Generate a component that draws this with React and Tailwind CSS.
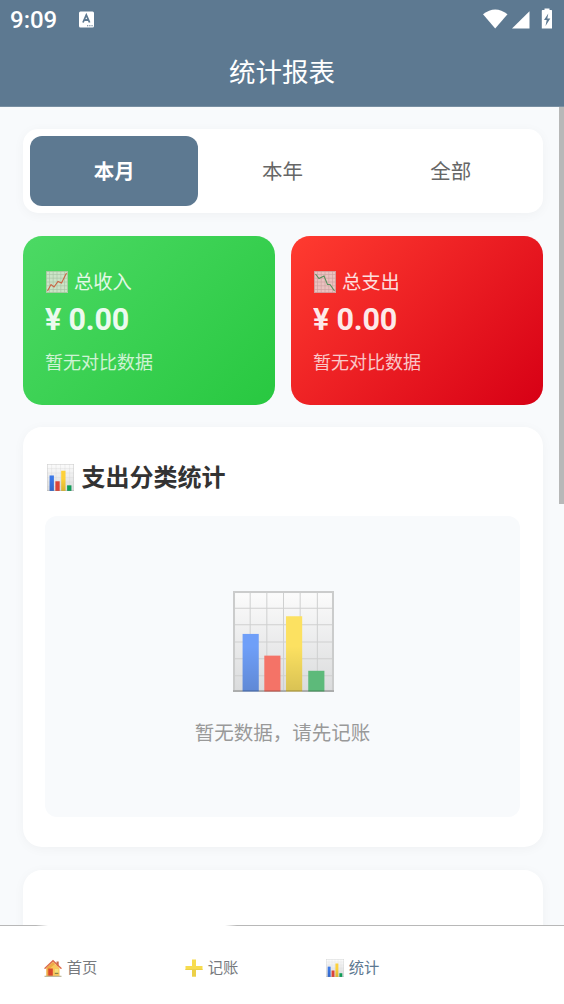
import React, { useState } from 'react';

function BarChartIcon({ className, faded }) {
  return (
    <svg viewBox="0 0 100 100" className={className}>
      <defs>
        <linearGradient id="paper" x1="0" y1="0" x2="0" y2="1">
          <stop offset="0" stopColor="#fcfcfc" />
          <stop offset="1" stopColor="#dadbdc" />
        </linearGradient>
        <linearGradient id="shade" x1="0" y1="0" x2="0" y2="1">
          <stop offset="0.4" stopColor="#000" stopOpacity="0" />
          <stop offset="1" stopColor="#000" stopOpacity="0.14" />
        </linearGradient>
      </defs>
      <rect width="100" height="100" fill="url(#paper)" />
      <path
        d="M17 0V100M33.500 0V100M50 0V100M66.500 0V100M83.500 0V100M0 17H100M0 33.500H100M0 50.500H100M0 67H100M0 84H100"
        stroke="#cfd0d0"
        strokeWidth="1"
      />
      <rect x="1" y="1" width="98" height="98" fill="none" stroke="#cbcccc" strokeWidth="2" />
      <g>
        <rect x="9.500" y="42.500" width="16" height="57" fill={faded ? '#6f9ff8' : '#3b78e7'} />
        <rect x="31" y="64" width="16" height="35.500" fill={faded ? '#f47367' : '#db4437'} />
        <rect x="52.500" y="25" width="16" height="74.500" fill={faded ? '#fce161' : '#fdd13a'} />
        <rect x="74.500" y="79" width="16" height="20.500" fill={faded ? '#5dba7a' : '#0f9d58'} />
        <path d="M9.500 42.500h16V99h-16zM52.500 25h16V99h-16z" fill="url(#shade)" />
      </g>
      <path d="M0 99H100" stroke="#000" strokeOpacity="0.15" strokeWidth="2" />
    </svg>
  );
}

function TrendIcon({ up }) {
  return (
    <svg viewBox="0 0 22 22" className="h-[22px] w-[22px] shrink-0">
      <rect width="22" height="22" fill={up ? '#e3e6da' : '#e9dcda'} />
      <path
        d="M3.500 0V22M7.200 0V22M11 0V22M14.800 0V22M18.500 0V22M0 3.500H22M0 7.200H22M0 11H22M0 14.800H22M0 18.500H22"
        stroke={up ? '#b9c0b0' : '#c4b4b3'}
        strokeWidth="0.6"
      />
      <rect x="0.500" y="0.500" width="21" height="21" fill="none" stroke={up ? '#b0c2a6' : '#c8a9a8'} strokeWidth="0.8" />
      {up ? (
        <path d="M1.500 20L5 13.500L8 16L12 10.500L15.500 12L20.500 2" fill="none" stroke="#e2503f" strokeWidth="1.100" />
      ) : (
        <path d="M1.500 3L5 7.500L10 5L13.500 13.500L16 13.500L20.500 20" fill="none" stroke="#3aa266" strokeWidth="1.100" />
      )}
    </svg>
  );
}

function HouseIcon() {
  return (
    <svg viewBox="0 0 18 18" className="h-[18px] w-[18px]">
      <path d="M12.500 2.500h2.200v5h-2.200z" fill="#c46a4a" />
      <path d="M2.500 9L9 3l6.500 6v8h-13z" fill="#f9c65c" />
      <path d="M2.500 9L9 3l2 2-7 6v6H2.500z" fill="#eeaa45" />
      <path d="M4.200 9.500h4.600v7.300H4.200z" fill="#d8472c" />
      <path d="M10.800 10h3.600v4.200h-3.600z" fill="#f5e27c" />
      <path d="M10.800 13.800h3.600v1h-3.600z" fill="#6e7446" />
      <path d="M1 9.300L9 1.800l8 7.500" fill="none" stroke="#dd6a48" strokeWidth="1.400" strokeLinecap="round" />
      <path d="M0.500 17.300h17" stroke="#b3ae8f" strokeWidth="1.100" />
    </svg>
  );
}

function PlusIcon() {
  return (
    <svg viewBox="0 0 18 18" className="h-[18px] w-[18px]">
      <path d="M7 0.500h4V7h6.500v4H11v6.500H7V11H0.500V7H7z" fill="#f7dc4e" />
      <path d="M7 11h4v6.500H7zM0.500 10h17V11H0.500z" fill="#ecd048" />
    </svg>
  );
}

function StatusBar() {
  return (
    <div className="flex h-[38px] items-center justify-between pl-[10px] pr-[10px]">
      <div className="flex items-center gap-[22px]">
        <span className="font-['Roboto'] text-[24px] font-medium leading-[38px] pt-[1px]">9:09</span>
        <svg viewBox="0 0 15 17" className="h-[17px] w-[15px]">
          <rect y="0.500" width="15" height="16" rx="1.500" fill="#fff" />
          <path d="M4 11.500L7.300 4l3.300 7.500M5.300 9h4" fill="none" stroke="#5d7991" strokeWidth="1.800" />
          <path d="M8 14.800h1.300M10.200 14.800h1.300M12.400 14.800h1.300" stroke="#5d7991" strokeWidth="1.100" />
        </svg>
      </div>
      <svg viewBox="0 0 72 22" className="h-[22px] w-[72px] fill-white">
        <path d="M1 6.200Q13.200-3.300 25.500 6.200L13.200 20.500z" />
        <path d="M47.500 3.200V20.500H30z" />
        <path
          fillRule="evenodd"
          d="M61 2h1.500V0.500h5V2h2q0.500 0 0.500 0.700V20.500H59.800V2.700q0-0.700 0.700-0.700zM66.300 5.500l-4.300 6.500h2.700l-1.200 6 4.800-7.500h-3z"
        />
      </svg>
    </div>
  );
}

function SummaryCard({ up, label, className }) {
  return (
    <div className={`h-[169px] flex-1 rounded-[19px] pl-[22px] pt-[34px] text-white ${className}`}>
      <div className="flex h-[25px] items-center gap-[6.500px] pl-[0.500px] opacity-85">
        <TrendIcon up={up} />
        <span className="text-[19.300px] leading-[25px]">{label}</span>
      </div>
      <p className="mt-[6px] font-['Roboto','Noto_Sans_CJK_SC',sans-serif] text-[30.500px] font-bold leading-[38px] tracking-[-0.200px] opacity-90">¥ 0.00</p>
      <p className="mt-[11px] text-[18px] leading-[25px] opacity-75">暂无对比数据</p>
    </div>
  );
}

function App() {
  const [period, setPeriod] = useState('本月');
  const periods = ['本月', '本年', '全部'];

  return (
    <div className="flex h-[1004px] w-[564px] flex-col overflow-hidden bg-[#f8fafc] font-['Roboto','Noto_Sans_CJK_SC',sans-serif]">
      <header className="h-[107px] shrink-0 border-b border-[#788fa2] bg-[#5d7991] text-white">
        <StatusBar />
        <h1 className="text-center text-[26.500px] leading-[70px]">统计报表</h1>
      </header>

      <div className="flex h-[818px] shrink-0">
        <main className="flex min-w-0 flex-1 flex-col gap-[22.500px] overflow-hidden pl-[23px] pr-[16px] pt-[22px]">
          {/* Period switch */}
          <div className="flex h-[84px] shrink-0 rounded-[15px] bg-white p-[7px] pr-[8px] shadow-[0_2px_12px_rgba(0,0,0,0.04)]">
            {periods.map((item) => (
              <button
                key={item}
                onClick={() => setPeriod(item)}
                className={`flex-1 rounded-[12px] pt-[3px] text-[20.500px] ${
                  period === item ? 'bg-[#5d7991] font-bold text-white' : 'text-[#666666]'
                }`}
              >
                {item}
              </button>
            ))}
          </div>

          {/* Income and expense */}
          <div className="flex shrink-0 gap-[16px]">
            <SummaryCard up label="总收入" className="bg-[linear-gradient(135deg,#4cd964,#28c840)]" />
            <SummaryCard label="总支出" className="bg-[linear-gradient(135deg,#ff3b30,#d70015)]" />
          </div>

          <section className="h-[420px] shrink-0 rounded-[19px] bg-white pl-[22px] pr-[23px] pt-[33px] shadow-[0_2px_12px_rgba(0,0,0,0.04)]">
            <div className="flex h-[34px] items-center gap-[7.500px] pl-[2px]">
              <BarChartIcon className="h-[27px] w-[27px]" />
              <h2 className="pt-[1px] text-[24px] font-bold leading-[34px] text-[#333333]">支出分类统计</h2>
            </div>
            <div className="mt-[22px] flex h-[301px] flex-col items-center rounded-[12px] bg-[#f8fafc] pt-[75px]">
              <BarChartIcon faded className="ml-[2px] h-[101px] w-[101px]" />
              <p className="mt-[27px] text-[19.500px] leading-[30px] text-[#999999]">暂无数据，请先记账</p>
            </div>
          </section>

          <section className="h-[420px] shrink-0 rounded-[19px] bg-white shadow-[0_2px_12px_rgba(0,0,0,0.04)]" />
        </main>
        <div className="h-[397px] w-[5px] shrink-0 bg-[#b7b8b8]" />
      </div>

      <nav className="relative grid h-[79px] shrink-0 grid-cols-4 border-t border-[#b8b8b8] bg-white pt-[6px] text-[15.300px] text-[#777a7e]">
        <div className="absolute left-[36px] top-[-4px] h-[6px] w-[201px] bg-[linear-gradient(90deg,transparent,#fff_6%,#fff_94%,transparent)]" />
        <a className="flex items-center justify-center gap-[5px]">
          <HouseIcon />
          首页
        </a>
        <a className="flex items-center justify-center gap-[5px]">
          <PlusIcon />
          记账
        </a>
        <a className="flex items-center justify-center gap-[5px] text-[#5d7991]">
          <BarChartIcon className="h-[18px] w-[18px]" />
          统计
        </a>
      </nav>
    </div>
  );
}

export default App;
